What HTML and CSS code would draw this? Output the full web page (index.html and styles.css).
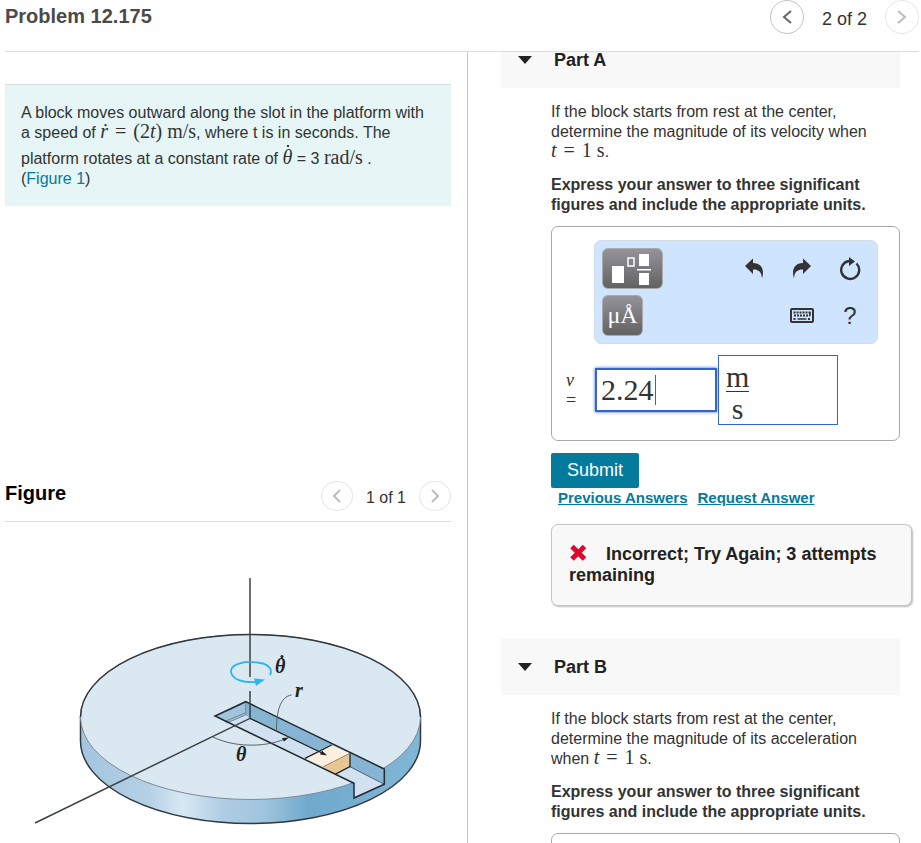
FILE: index.html
```html
<!DOCTYPE html>
<html lang="en">
<head>
    <meta charset="UTF-8">
    <title>Problem 12.175</title>
    <link rel="stylesheet" href="styles.css">
</head>
<body>

    <header>
        <h1>Problem 12.175</h1>
        <nav class="pager">
            <button class="round" aria-label="Previous problem">
                <svg width="12" height="16" viewBox="0 0 12 16"><path d="M10 2 3 8l7 6"/></svg>
            </button>
            <span>2 of 2</span>
            <button class="round" aria-label="Next problem" disabled>
                <svg width="12" height="16" viewBox="0 0 12 16"><path d="M2 2 9 8l-7 6"/></svg>
            </button>
        </nav>
    </header>

    <main>
        <div class="left">
            <div class="problem">
                A block moves outward along the slot in the platform with a speed of
                <span class="math"><i>ṙ</i><span class="op">=</span>(2<i>t</i>) m/s</span>, where t is in seconds. The
                platform rotates at a constant rate of <span class="math theta"><i>θ</i></span> = 3
                <span class="math">rad/s</span> .<br>
                (<a href="#figure">Figure 1</a>)
            </div>

            <section class="figure" id="figure">
                <div class="figure-head">
                    <h2>Figure</h2>
                    <nav class="pager small">
                        <button class="round" aria-label="Previous figure" disabled>
                            <svg width="10" height="16" viewBox="0 0 10 16"><path d="M8 2 2 8l6 6"/></svg>
                        </button>
                        <span>1 of 1</span>
                        <button class="round" aria-label="Next figure" disabled>
                            <svg width="10" height="16" viewBox="0 0 10 16"><path d="M2 2l6 6-6 6"/></svg>
                        </button>
                    </nav>
                </div>
                <svg class="drawing" viewBox="5 522 446 321" role="img" aria-label="Rotating platform with a block in a slot">
                    <defs>
                        <linearGradient id="rim" x1="80" x2="421" y1="0" y2="0" gradientUnits="userSpaceOnUse">
                            <stop offset="0" stop-color="#a3c5df"/>
                            <stop offset=".2" stop-color="#b4d0e5"/>
                            <stop offset=".3" stop-color="#d8e8f3"/>
                            <stop offset=".42" stop-color="#aecce3"/>
                            <stop offset=".54" stop-color="#a0c5de"/>
                            <stop offset=".67" stop-color="#6fa9cd"/>
                            <stop offset="1" stop-color="#82b6d5"/>
                        </linearGradient>
                    </defs>
                    <!-- platform -->
                    <path d="M80.500 717v24a170 82.500 0 0 0 340 0v-24z" fill="url(#rim)" stroke="#32383d" stroke-width="1.500"/>
                    <ellipse cx="250.500" cy="717" rx="170" ry="82.500" fill="#dae8f1" stroke="#7f8b94"/>
                    <path d="M80.500 717a170 82.500 0 0 1 340 0" fill="none" stroke="#32383d" stroke-width="1.500"/>
                    <!-- slot -->
                    <path d="M215 716 245.700 701.700 384.300 769V784.300L354 798V783.300z" fill="#d2e1ef"/>
                    <path d="M215 716 245.700 701.700V715L226.500 723z" fill="#9fc4dc"/>
                    <path d="M245.700 701.700 384.300 769V784.300L350 766.700 250 718.300 245.700 715z" fill="#86b5d3"/>
                    <path d="M226.500 723 245.700 715V702M226 721l19-8" fill="none" stroke="#65747e" stroke-width=".8"/>
                    <path d="M350 766.700 384.300 784.300" stroke="#53616b"/>
                    <!-- block -->
                    <path d="M331.700 745 350 753.300 323.300 766.700 305 758.300z" fill="#fbf0df"/>
                    <path d="M323.300 766.700 350 753.300V766.700L335 774.300z" fill="#e6c794"/>
                    <path d="M331.700 745 305 758.300M350 753.300V766.700L335 774.300" fill="none" stroke="#222" stroke-width="1.300"/>
                    <path d="M323.300 766.700 350 753.300" stroke="#8c7650" stroke-width=".8"/>
                    <path d="M354 783.300 215 716 245.700 701.700 384.300 769V784.300L354 798z" fill="none" stroke="#222a30" stroke-width="1.500"/>
                    <!-- axes and arrows -->
                    <path d="M250 578V677M250 691V718.300L35 823" fill="none" stroke="#3d4246" stroke-width="1.500"/>
                    <path d="M250 718.300 322 753" stroke="#222" stroke-width="1.300"/>
                    <path d="M327 755.500 320 754.500 322 750.500z" fill="#222"/>
                    <path d="M213 737c20 10 50 11 72 2M276.500 730c0-17 3-33 15-35" fill="none" stroke="#596168"/>
                    <path d="M289 737.500 282 738 284 741.500z" fill="#222"/>
                    <path d="M270 675c3-6-2-11-10-12-14-3-30 1-29 9 1 8 13 11 26 10" fill="none" stroke="#2cb4ec" stroke-width="1.800"/>
                    <path d="M265 679.500 254 678.500 256 686z" fill="#2cb4ec"/>
                    <g class="labels">
                        <text x="275" y="673">θ</text>
                        <circle cx="282" cy="656.500" r="1.500"/>
                        <text x="295" y="697">r</text>
                        <text x="236" y="761">θ</text>
                    </g>
                </svg>
            </section>
        </div>

        <div class="right">
            <section class="part">
                <h3><span class="arrow"></span>Part A</h3>
                <div class="part-body">
                    <p>If the block starts from rest at the center, determine the magnitude of its velocity when <span class="math"><i>t</i><span class="op">=</span>1 s</span>.</p>
                    <p><b>Express your answer to three significant figures and include the appropriate units.</b></p>
                    <div class="answer">
                        <div class="toolbar">
                            <div class="templates">
                                <button class="wide" aria-label="Templates">
                                    <svg width="44" height="36" viewBox="0 0 44 36">
                                        <path d="M1 15h12v17H1zM28 3h10v12H28zM28 22h10v12H28zM26 18h14v1.500H26z" fill="#fff"/>
                                        <path d="M17 7h6v8h-6z" fill="none" stroke="#fff" stroke-width="1.500"/>
                                    </svg>
                                </button>
                                <button>μÅ</button>
                            </div>
                            <div class="tools">
                                <button aria-label="Undo">
                                    <svg width="24" height="24" viewBox="0 0 24 24"><path d="M3 9 11 1.500V6c8 0 12 6 9 15.500C19.500 15 17 12.500 11 12.500V17z"/></svg>
                                </button>
                                <button aria-label="Redo">
                                    <svg width="24" height="24" viewBox="0 0 24 24"><path d="M21 9 13 1.500V6C5 6 1 12 4 21.500 4.500 15 7 12.500 13 12.500V17z"/></svg>
                                </button>
                                <button aria-label="Reset">
                                    <svg width="24" height="24" viewBox="0 0 24 24"><path d="M18.500 6.500a9 9 0 1 1-7.500-2.500" fill="none" stroke="#333" stroke-width="2.400"/><path d="M11 0 17 4.500 11 9z"/></svg>
                                </button>
                                <span></span>
                                <button aria-label="Keyboard shortcuts">
                                    <svg width="24" height="16" viewBox="0 0 24 16">
                                        <rect x="1" y="1" width="22" height="13" rx="1" fill="none" stroke="#333" stroke-width="2"/>
                                        <path d="M3.500 4.500H20.500M4 7.500H20M3.500 11H6M18 11H21" stroke="#333" stroke-width="2" stroke-dasharray="2 1"/>
                                        <path d="M7.500 11H16.500M20 4V8" stroke="#333" stroke-width="1.500"/>
                                    </svg>
                                </button>
                                <button class="help" aria-label="Help">?</button>
                            </div>
                        </div>
                        <div class="fields">
                            <label for="value"><i>v</i><br>=</label>
                            <div class="value-box">
                                <input id="value" type="text" value="2.24">
                                <span class="caret"></span>
                            </div>
                            <div class="units" contenteditable="true" role="textbox" aria-label="Units">
                                <span class="fraction"><span>m</span><span>s</span></span>
                            </div>
                        </div>
                    </div>
                    <button class="submit">Submit</button>
                    <div class="links">
                        <a href="#previous">Previous Answers</a>
                        <a href="#request">Request Answer</a>
                    </div>
                    <div class="feedback">
                        <svg width="20" height="18" viewBox="0 0 20 18"><path d="M3 2.500 15.500 15M15.500 2.500 3 15" stroke="#e1062c" stroke-width="5"/></svg>
                        Incorrect; Try Again; 3 attempts remaining
                    </div>
                </div>
            </section>

            <section class="part">
                <h3><span class="arrow"></span>Part B</h3>
                <div class="part-body">
                    <p>If the block starts from rest at the center, determine the magnitude of its acceleration when <span class="math"><i>t</i><span class="op">=</span>1 s</span>.</p>
                    <p><b>Express your answer to three significant figures and include the appropriate units.</b></p>
                    <div class="answer"></div>
                </div>
            </section>
        </div>
    </main>

</body>
</html>
```
FILE: styles.css
```css
* {
    box-sizing: border-box;
}
body {
    font-family: "Liberation Sans", Arial, sans-serif;
    font-size: 16px;
    line-height: 20px;
    color: #333;
    margin: 0;
    height: 100vh;
    overflow: hidden;
    display: flex;
    flex-direction: column;
}
h1, h2, h3, p {
    margin: 0;
}
button {
    font-family: inherit;
    padding: 0;
    cursor: pointer;
}
a {
    color: #047a9c;
    text-decoration: none;
}

header {
    display: flex;
    justify-content: space-between;
    align-items: flex-start;
    height: 52px;
    flex: none;
    margin: 0 2px 0 5px;
    border-bottom: 1px solid #dcdcdc;
}
h1 {
    font-size: 20px;
    line-height: 32px;
    color: #4a4a4a;
}
.pager {
    display: flex;
    align-items: center;
    gap: 18px;
    font-size: 18px;
}
.pager span {
    padding-top: 4px;
}
.round {
    width: 34px;
    height: 34px;
    border: 1px solid #c4c4c4;
    border-radius: 50%;
    background-color: white;
    display: flex;
    align-items: center;
    justify-content: center;
}
.round path {
    fill: none;
    stroke: #666;
    stroke-width: 2;
}
.round:disabled {
    border-color: #e6e6e6;
}
.round:disabled path {
    stroke: #bbb;
}
.pager.small {
    gap: 13px;
    font-size: 16px;
}
.small .round {
    width: 32px;
    height: 30px;
}

main {
    flex: 1;
    min-height: 0;
    display: grid;
    grid-template-columns: 468fr 453fr;
}
.left {
    display: flex;
    flex-direction: column;
    justify-content: space-between;
    padding: 32px 16px 0 5px;
    border-right: 1px solid #bfc5cc;
    overflow: hidden;
}
.problem {
    background-color: #e6f6f7;
    border-top: 1px solid #d5dddd;
    padding: 18px 16px 17px;
}
.math {
    font-family: "Liberation Serif", "Times New Roman", serif;
    font-size: 20px;
    line-height: 0;
    white-space: nowrap;
}
.op {
    margin: 0 7px;
}
.theta {
    display: inline-block;
    position: relative;
    padding-top: 4px;
    line-height: 20px;
}
.theta::after {
    content: "";
    position: absolute;
    top: 2px;
    left: 5px;
    width: 2px;
    height: 2px;
    background-color: #333;
}
.figure-head {
    display: flex;
    justify-content: space-between;
    align-items: flex-start;
    padding-bottom: 10px;
    border-bottom: 1px solid #dcdcdc;
}
h2 {
    font-size: 20px;
    line-height: 24px;
    color: black;
}
.drawing {
    display: block;
    width: 100%;
}
.labels {
    font-family: "Liberation Serif", serif;
    font-size: 20px;
    font-style: italic;
    font-weight: bold;
    fill: #222;
}

.right {
    overflow: hidden;
    padding: 0 21px 0 33px;
}
.part {
    margin-bottom: 32px;
}
/* pane is scrolled a little under the header */
.part:first-child {
    margin-top: -21px;
}
h3 {
    display: flex;
    align-items: center;
    gap: 22px;
    height: 57px;
    padding-left: 17px;
    background-color: #f8f8f8;
    font-size: 18px;
    color: #222;
}
.arrow {
    border: 7px solid transparent;
    border-top: 8px solid #222;
    border-bottom: 0;
}
.part-body {
    padding: 14px 0 0 50px;
}
.part-body p {
    margin-bottom: 13px;
    padding-right: 8px;
}
.part-body p + p {
    margin-bottom: 11px;
}
.answer {
    min-height: 215px;
    padding: 13px 21px 15px 14px;
    border: 1px solid #a8a8a8;
    border-radius: 7px;
}
.toolbar {
    display: flex;
    justify-content: space-between;
    margin-left: 28px;
    padding: 7px 3px 7px 7px;
    border: 1px solid #d5dce4;
    border-radius: 7px;
    background-color: #cfe5ff;
}
.templates {
    display: flex;
    flex-direction: column;
    gap: 6px;
}
.templates button {
    width: 41px;
    height: 41px;
    border: 1px solid #aaa;
    border-radius: 6px;
    background: linear-gradient(#94939b, #626262);
    color: white;
    font-family: "Liberation Serif", serif;
    font-size: 24px;
}
.templates .wide {
    width: 61px;
}
.templates svg {
    display: block;
    margin: 0 auto;
}
.tools {
    display: grid;
    grid-template-columns: repeat(3, 48px);
    grid-template-rows: 41px 41px;
    row-gap: 6px;
    align-items: center;
}
.tools button {
    display: flex;
    justify-content: center;
    border: 0;
    background: none;
    color: #333;
}
.tools path {
    fill: #333;
}
.tools path[fill="none"] {
    fill: none;
}
.tools .help {
    font-size: 24px;
}
.fields {
    display: flex;
    align-items: center;
    margin-top: 11px;
}
.fields label {
    width: 29px;
    font-family: "Liberation Serif", serif;
    font-size: 18px;
}
.value-box {
    position: relative;
    width: 122px;
}
.value-box input {
    display: block;
    width: 100%;
    height: 44px;
    padding: 0 4px;
    border: 2px solid #36c;
    box-shadow: 0 0 3px #36c;
    outline: none;
    font-family: "Liberation Serif", serif;
    font-size: 30px;
    color: #333;
}
.caret {
    position: absolute;
    top: 7px;
    left: 60px;
    width: 1px;
    height: 30px;
    background-color: #36c;
}
.units {
    width: 120px;
    height: 70px;
    margin-left: 1px;
    padding: 7px;
    border: 1px solid #36c;
    font-family: "Liberation Serif", serif;
    font-size: 30px;
    line-height: 28px;
}
.fraction {
    display: inline-flex;
    flex-direction: column;
    align-items: center;
    gap: 3px;
}
.fraction span:first-child {
    border-bottom: 1px solid #333;
}
.submit {
    display: block;
    height: 35px;
    margin-top: 12px;
    padding: 0 16px;
    border: 0;
    border-radius: 2px;
    background-color: #047a9c;
    color: white;
    font-size: 18px;
}
.links {
    display: flex;
    gap: 10px;
    padding-left: 7px;
    font-size: 15px;
    font-weight: bold;
}
.links a {
    text-decoration: underline;
}
.feedback {
    margin: 16px -12px 0 0;
    padding: 19px 17px;
    border: 1px solid #c4c4c4;
    border-radius: 7px;
    box-shadow: 1px 1px 2px #bbb;
    background-color: #f8f8f8;
    font-size: 18px;
    line-height: 21px;
    font-weight: bold;
    color: #222;
}
.feedback svg {
    margin-right: 12px;
    vertical-align: -2px;
}
```
